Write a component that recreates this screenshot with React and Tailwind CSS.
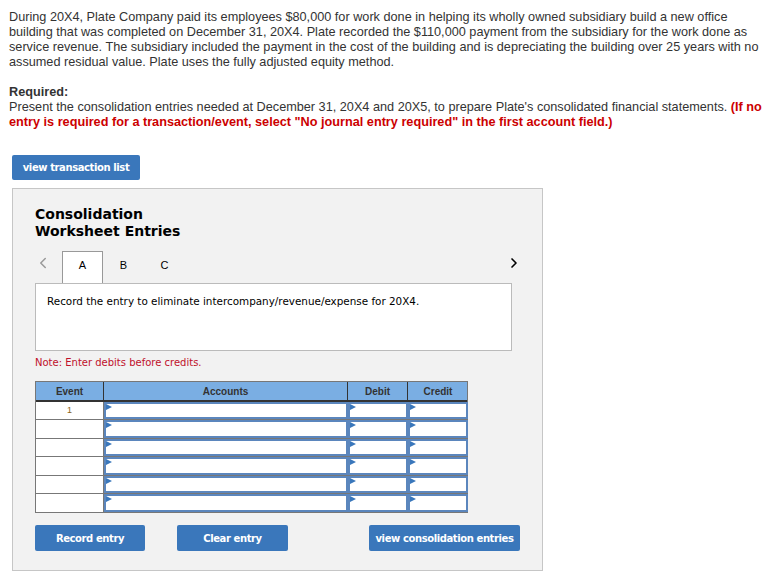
import { ChevronLeft, ChevronRight } from 'lucide-react';

const rows = ['1', '', '', '', '', ''];

function InputCell() {
  return (
    <div className="relative h-full border-2 border-[#5b86bd] bg-white">
      <span className="absolute left-0 top-0 h-0 w-0 border-y-[3px] border-l-[6px] border-y-transparent border-l-[#3a77bb]" />
    </div>
  );
}

export default function App() {
  return (
    <div className="min-h-[585px] bg-white pl-[9px] pr-1 pt-[10px] text-[#333]">
      <div className="whitespace-nowrap font-['Liberation_Sans',Arial,sans-serif] text-[12.7px] leading-[15px]">
        <p>
          During 20X4, Plate Company paid its employees $80,000 for work done in helping its wholly owned subsidiary build a new office
          <br />
          building that was completed on December 31, 20X4. Plate recorded the $110,000 payment from the subsidiary for the work done as
          <br />
          service revenue. The subsidiary included the payment in the cost of the building and is depreciating the building over 25 years with no
          <br />
          assumed residual value. Plate uses the fully adjusted equity method.
        </p>
        <p className="mt-[15px] font-bold">Required:</p>
        <p>
          Present the consolidation entries needed at December 31, 20X4 and 20X5, to prepare Plate's consolidated financial statements.{' '}
          <span className="font-bold text-[#c00]">(If no</span>
          <br />
          <span className="font-bold text-[#c00]">
            entry is required for a transaction/event, select "No journal entry required" in the first account field.)
          </span>
        </p>
      </div>

      <button
        type="button"
        className="ml-[3px] mt-[25px] flex h-[25px] w-[128px] items-center justify-center rounded-[2px] bg-[#3a77bb] font-['DejaVu_Sans',Verdana,sans-serif] text-[10px] font-bold tracking-[-0.4px] text-white"
      >
        view transaction list
      </button>

      <div className="ml-[3px] mt-[8px] w-[531px] border border-[#c6c6c6] bg-[#f2f2f2] pb-[19px] pl-[22px] pr-[20px] pt-[17px] font-['DejaVu_Sans',Verdana,sans-serif]">
        <h2 className="text-[14px] font-bold leading-[17px] text-black">
          Consolidation
          <br />
          Worksheet Entries
        </h2>

        <div className="mt-[11px] flex h-[32px] items-start">
          <ChevronLeft size={18} strokeWidth={2} className="ml-[-1px] mt-[3px] text-[#999]" />
          <div className="ml-[10px] flex h-[32px] w-[41px] justify-center border border-b-0 border-[#999] bg-white pt-[5px] font-['Liberation_Sans',Arial,sans-serif] text-[11px] text-black">
            A
          </div>
          <div className="flex h-[32px] w-[41px] justify-center pt-[6px] font-['Liberation_Sans',Arial,sans-serif] text-[11px] text-black">
            B
          </div>
          <div className="flex h-[32px] w-[41px] justify-center pt-[6px] font-['Liberation_Sans',Arial,sans-serif] text-[11px] text-black">
            C
          </div>
          <ChevronRight size={16} strokeWidth={2.5} className="ml-auto mt-[4px] text-black" />
        </div>

        <div className="h-[68px] w-[477px] border border-[#bbb] bg-white px-[11px] pt-[11px] text-[10.4px] leading-[12px] text-black">
          Record the entry to eliminate intercompany/revenue/expense for 20X4.
        </div>

        <p className="mt-[6px] text-[10px] leading-[12px] text-[#c0102a]">Note: Enter debits before credits.</p>

        <div className="mt-[12px] w-[433px] border border-[#777] font-['Liberation_Sans',Arial,sans-serif]">
          <div className="grid h-[20px] grid-cols-[68px_244px_60px_60px] border-b-2 border-[#333] bg-[#7aaee3] text-[10px] font-bold text-[#333]">
            <div className="flex items-center justify-center border-r border-[#333]">Event</div>
            <div className="flex items-center justify-center border-r border-[#333]">Accounts</div>
            <div className="flex items-center justify-center border-r border-[#333]">Debit</div>
            <div className="flex items-center justify-center">Credit</div>
          </div>
          {rows.map((ev, i) => (
            <div
              key={i}
              className={`grid h-[18.4px] grid-cols-[68px_244px_60px_60px] ${i < rows.length - 1 ? 'border-b border-[#777]' : ''}`}
            >
              <div className="flex items-center justify-center border-r border-[#777] bg-white text-[9px] text-[#8a6320]">
                {ev}
              </div>
              <InputCell />
              <InputCell />
              <InputCell />
            </div>
          ))}
        </div>

        <div className="mt-[12px] flex items-center">
          <button
            type="button"
            className="flex h-[26px] w-[110px] shrink-0 items-center justify-center rounded-[2px] bg-[#3a77bb] text-[10px] font-bold tracking-[-0.4px] text-white"
          >
            Record entry
          </button>
          <button
            type="button"
            className="ml-[32px] flex h-[26px] w-[111px] shrink-0 items-center justify-center rounded-[2px] bg-[#3a77bb] text-[10px] font-bold tracking-[-0.4px] text-white"
          >
            Clear entry
          </button>
          <button
            type="button"
            className="ml-[81px] flex h-[26px] w-[151px] shrink-0 items-center justify-center rounded-[2px] bg-[#3a77bb] text-[10px] font-bold tracking-[-0.4px] text-white"
          >
            view consolidation entries
          </button>
        </div>
      </div>
    </div>
  );
}
